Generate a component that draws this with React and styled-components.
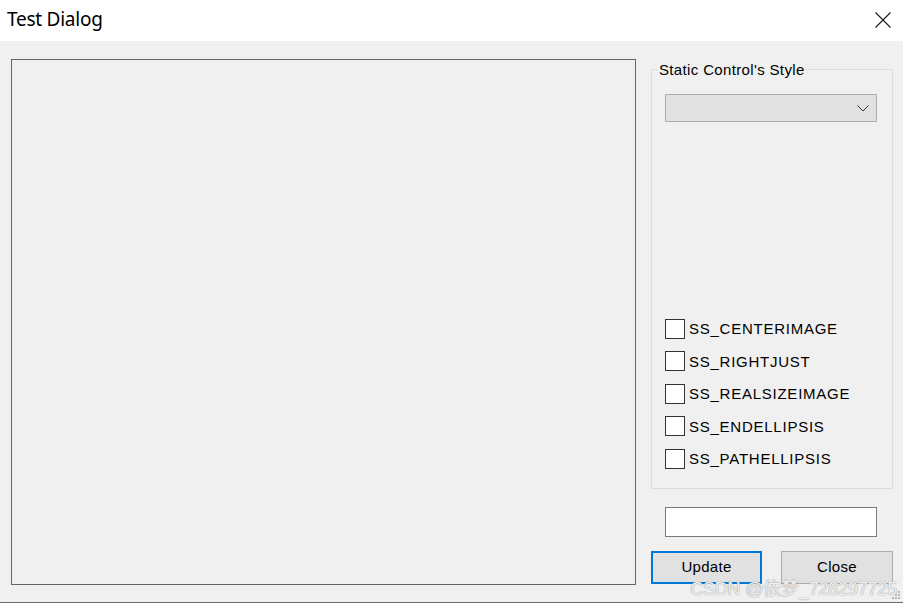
import React from 'react';
import styled, { createGlobalStyle } from 'styled-components';

const GlobalStyle = createGlobalStyle`
  html, body {
    margin: 0;
    padding: 0;
    background: #ffffff;
  }
  * {
    box-sizing: border-box;
  }
`;

const Window = styled.div`
  width: 903px;
  height: 603px;
  display: flex;
  flex-direction: column;
  font-family: "Liberation Sans", Arial, sans-serif;
  font-size: 15px;
  letter-spacing: 0.6px;
  color: #000;
`;

const TitleBar = styled.div`
  height: 41px;
  flex: none;
  background: #ffffff;
  display: flex;
  align-items: center;
  justify-content: space-between;
  padding: 0 12px 4px 7px;
`;

const Title = styled.div`
  font-family: "Noto Sans", "Open Sans", sans-serif;
  font-size: 19px;
  letter-spacing: -0.25px;
`;

const CloseX = styled.svg`
  width: 16px;
  height: 16px;
  display: block;
  margin-top: 2px;
`;

const Body = styled.div`
  flex: 1;
  position: relative;
  background: #f0f0f0;
  border-bottom: 1px solid #6a6a6a;
  display: flex;
  align-items: flex-start;
  padding: 18px 0 0 11px;
`;

const Canvas = styled.div`
  width: 625px;
  height: 526px;
  border: 1px solid #646464;
  flex: none;
`;

const Side = styled.div`
  width: 242px;
  margin-left: 15px;
  margin-top: 2px;
  display: flex;
  flex-direction: column;
`;

const Group = styled.fieldset`
  margin: 0;
  padding: 0 14px 20px 13px;
  border: 1px solid #dcdcdc;
  display: flex;
  flex-direction: column;
`;

const Legend = styled.legend`
  padding: 0 1px;
  margin-left: -7px;
  line-height: 17px;
  font-size: 15px;
  letter-spacing: 0.35px;
`;

const Combo = styled.div`
  margin-top: 16px;
  width: 212px;
  height: 28px;
  background: #e1e1e1;
  border: 1px solid #adadad;
  display: flex;
  align-items: center;
  justify-content: flex-end;
  padding-right: 7px;
`;

const Chevron = styled.svg`
  width: 12px;
  height: 7px;
  display: block;
`;

const CheckList = styled.div`
  margin-top: 197px;
  display: flex;
  flex-direction: column;
  gap: 13.5px;
`;

const CheckRow = styled.label`
  display: flex;
  align-items: center;
  height: 19px;
  gap: 4px;
  letter-spacing: 0.75px;
`;

const Box = styled.span`
  width: 20px;
  height: 20px;
  border: 1px solid #333333;
  background: #ffffff;
  flex: none;
`;

const Edit = styled.div`
  margin: 18px 0 0 14px;
  width: 212px;
  height: 30px;
  background: #ffffff;
  border: 1px solid #7a7a7a;
`;

const Buttons = styled.div`
  margin-top: 14px;
  display: flex;
  gap: 19px;
`;

const Button = styled.div`
  width: ${p => (p.$default ? 111 : 112)}px;
  height: 33px;
  padding-bottom: 2px;
  background: #e1e1e1;
  border: ${p => (p.$default ? '2px solid #0078d7' : '1px solid #adadad')};
  display: flex;
  align-items: center;
  justify-content: center;
  font-size: 15px;
  letter-spacing: 0.3px;
`;

const Watermark = styled.div`
  position: absolute;
  right: 6px;
  bottom: 2px;
  font-family: "Liberation Sans", "Noto Sans CJK SC", sans-serif;
  font-size: 18px;
  letter-spacing: -0.2px;
  color: rgba(255, 255, 255, 0.85);
  text-shadow: 0 0 1px #9a9a9a, 0 0 1px #9a9a9a;
  pointer-events: none;
`;

const Grip = styled.svg`
  position: absolute;
  right: 2px;
  bottom: 2px;
  width: 10px;
  height: 10px;
`;

const styles = [
  'SS_CENTERIMAGE',
  'SS_RIGHTJUST',
  'SS_REALSIZEIMAGE',
  'SS_ENDELLIPSIS',
  'SS_PATHELLIPSIS',
];

export default function App() {
  return (
    <>
      <GlobalStyle />
      <Window>
        <TitleBar>
          <Title>Test Dialog</Title>
          <CloseX viewBox="0 0 16 16">
            <path d="M0.5 0.5 L15.5 15.5 M15.5 0.5 L0.5 15.5" stroke="#1a1a1a" strokeWidth="1.1" fill="none" />
          </CloseX>
        </TitleBar>
        <Body>
          <Canvas />
          <Side>
            <Group>
              <Legend>Static Control's Style</Legend>
              <Combo>
                <Chevron viewBox="0 0 12 7">
                  <path d="M0.5 0.5 L6 6 L11.5 0.5" stroke="#333" strokeWidth="1" fill="none" />
                </Chevron>
              </Combo>
              <CheckList>
                {styles.map(s => (
                  <CheckRow key={s}>
                    <Box />
                    {s}
                  </CheckRow>
                ))}
              </CheckList>
            </Group>
            <Edit />
            <Buttons>
              <Button $default>Update</Button>
              <Button>Close</Button>
            </Buttons>
          </Side>
          <Watermark>CSDN @依梦_728297725</Watermark>
          <Grip viewBox="0 0 10 10">
            {[[8, 2], [8, 5], [8, 8], [5, 5], [5, 8], [2, 8]].map(([x, y]) => (
              <rect key={`${x}-${y}`} x={x - 1} y={y - 1} width="2" height="2" fill="#b8b8b8" />
            ))}
          </Grip>
        </Body>
      </Window>
    </>
  );
}
